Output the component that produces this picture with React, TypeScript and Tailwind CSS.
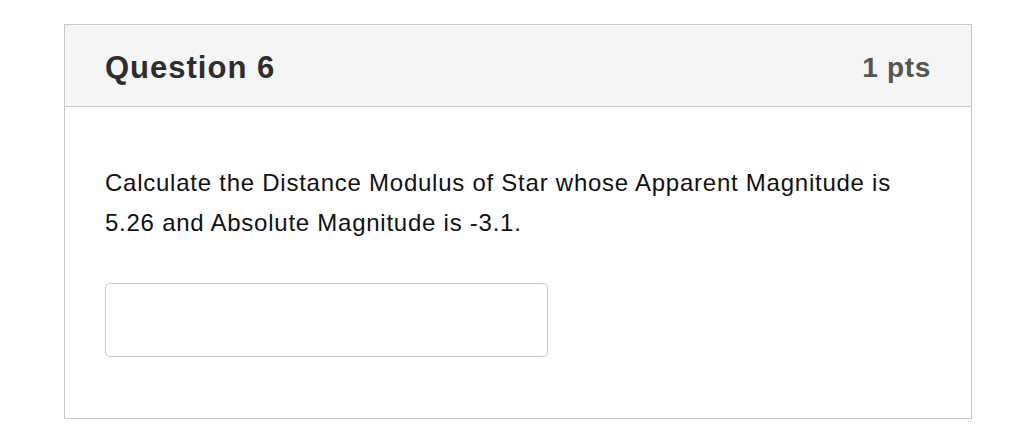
import React from 'react';

export default function App() {
  return (
    <div className="min-h-screen bg-white pt-6 pl-16" style={{ fontFamily: '"Liberation Sans", Arial, sans-serif' }}>
      <div className="w-[908px] h-[395px] border border-[#c2c7cb] flex flex-col">
        <div className="h-[82px] shrink-0 bg-[#f5f5f5] border-b border-[#c2c7cb] flex items-center justify-between pl-10 pr-10 pt-[5px]">
          <h2 className="text-[31px] font-bold text-[#2d2d2d] tracking-[1px]">Question 6</h2>
          <span className="text-[28px] font-bold text-[#555555] tracking-[0.7px]">1 pts</span>
        </div>
        <div className="pl-10 pr-10 pt-[56px]">
          <p className="text-[24px] leading-[40px] text-[#111111] tracking-[0.75px]">
            Calculate the Distance Modulus of Star whose Apparent Magnitude is
            <br />
            5.26 and Absolute Magnitude is -3.1.
          </p>
          <input
            type="text"
            className="mt-[40px] w-[443px] h-[74px] border border-[#cccccc] rounded-[5px] bg-white outline-none"
          />
        </div>
      </div>
    </div>
  );
}
